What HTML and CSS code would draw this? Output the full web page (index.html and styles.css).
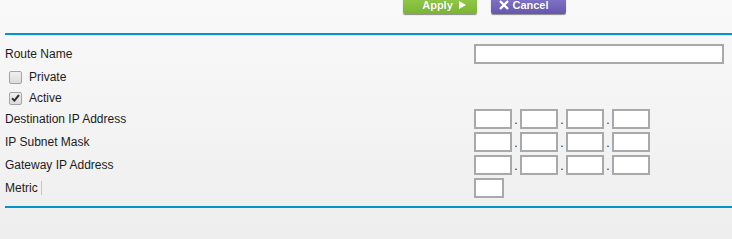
FILE: index.html
```html
<!DOCTYPE html>
<html lang="en">

<head>
    <meta charset="UTF-8">
    <title>Static Route</title>
    <link rel="stylesheet" href="styles.css">
</head>

<body>
    <div class="button-bar">
        <button class="btn apply">Apply
            <svg width="7" height="8" viewBox="0 0 7 8"><path d="M0 0 L7 4 L0 8 Z" fill="#fff"/></svg>
        </button>
        <button class="btn cancel">
            <svg width="10" height="10" viewBox="0 0 10 10"><path d="M1 1 L9 9 M9 1 L1 9" stroke="#fff" stroke-width="2.4"/></svg>
            Cancel
        </button>
    </div>

    <div class="form">
        <div class="row route">
            <div class="label">Route Name</div>
            <input type="text" class="txt wide">
        </div>
        <div class="row check">
            <span class="cbox"></span>
            <span>Private</span>
        </div>
        <div class="row check">
            <span class="cbox">
                <svg width="9" height="8" viewBox="0 0 9 8"><path d="M1 4.2 L3.4 6.6 L8 1" stroke="#333" stroke-width="2" fill="none"/></svg>
            </span>
            <span>Active</span>
        </div>
        <div class="row ip">
            <div class="label">Destination IP Address</div>
            <input type="text" class="txt octet"><span class="dot">.</span>
            <input type="text" class="txt octet"><span class="dot">.</span>
            <input type="text" class="txt octet"><span class="dot">.</span>
            <input type="text" class="txt octet">
        </div>
        <div class="row ip">
            <div class="label">IP Subnet Mask</div>
            <input type="text" class="txt octet"><span class="dot">.</span>
            <input type="text" class="txt octet"><span class="dot">.</span>
            <input type="text" class="txt octet"><span class="dot">.</span>
            <input type="text" class="txt octet">
        </div>
        <div class="row ip">
            <div class="label">Gateway IP Address</div>
            <input type="text" class="txt octet"><span class="dot">.</span>
            <input type="text" class="txt octet"><span class="dot">.</span>
            <input type="text" class="txt octet"><span class="dot">.</span>
            <input type="text" class="txt octet">
        </div>
        <div class="row metric">
            <div class="label">Metric<span class="caret"></span></div>
            <input type="text" class="txt small">
        </div>
    </div>
</body>

</html>
```

FILE: styles.css
```css
* {
    margin: 0;
    padding: 0;
    box-sizing: border-box;
}

html,
body {
    height: 100%;
}

body {
    font-family: "Liberation Sans", Arial, sans-serif;
    font-size: 12px;
    color: #1c1c1c;
    background: linear-gradient(to bottom, #f9f9f9, #eeeeee);
    overflow: hidden;
}

.button-bar {
    display: flex;
    gap: 14px;
    padding-left: 403px;
    margin-top: -4px;
    height: 18px;
}

.btn {
    display: flex;
    align-items: center;
    justify-content: center;
    gap: 6px;
    height: 18px;
    border: none;
    border-radius: 2px;
    color: #fff;
    font-family: "Liberation Sans", Arial, sans-serif;
    font-size: 11px;
    line-height: 11px;
    font-weight: bold;
    text-shadow: 0 0 1px rgba(0, 0, 0, 0.25);
    box-shadow: 0 1px 1px rgba(0, 0, 0, 0.45);
}

.apply {
    width: 74px;
    padding-left: 8px;
    background: linear-gradient(to bottom, #95cb4c, #79b532);
}

.cancel {
    width: 75px;
    gap: 3px;
    padding-right: 9px;
    background: linear-gradient(to bottom, #8479cc, #6657ad);
}

.form {
    margin: 19px 0 0 5px;
    padding: 9px 0 8px;
    border-top: 2px solid #0096cd;
    border-bottom: 2px solid #0096cd;
}

.row {
    display: flex;
    align-items: center;
    height: 20px;
    margin-bottom: 3px;
}

.row.check {
    margin-bottom: 1px;
    padding-left: 4px;
}

.row.metric {
    margin-bottom: 0;
}

.label {
    width: 469px;
    display: flex;
    align-items: center;
}

.cbox {
    display: flex;
    align-items: center;
    justify-content: center;
    width: 13px;
    height: 13px;
    margin-right: 7px;
    border: 1px solid #a3a3a3;
    border-radius: 2px;
    background: linear-gradient(to bottom, #f0f0f0, #dcdcdc);
}

.txt {
    height: 20px;
    border: 2px solid #a9a9a9;
    background: #fff;
    outline: none;
}

.wide {
    width: 250px;
}

.octet {
    width: 38px;
}

.small {
    width: 30px;
}

.dot {
    width: 8px;
    text-align: center;
    font-size: 12px;
    line-height: 20px;
    padding-top: 2px;
    color: #222;
}

.caret {
    display: inline-block;
    width: 1px;
    height: 14px;
    margin-left: 3px;
    background: #b4cbe2;
}
```
